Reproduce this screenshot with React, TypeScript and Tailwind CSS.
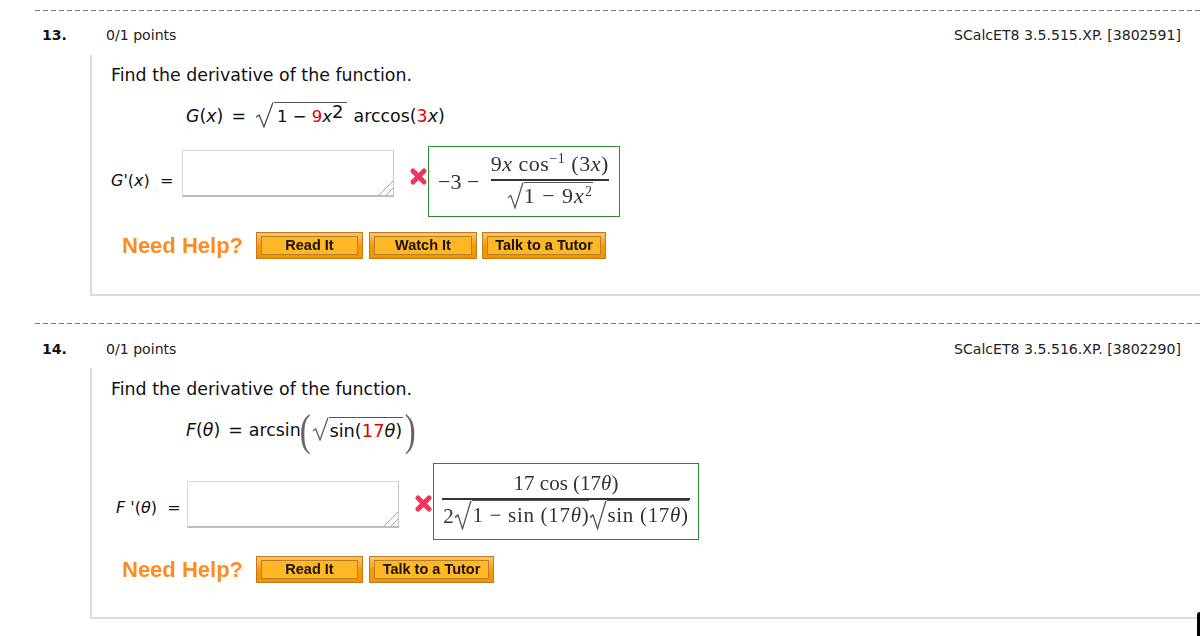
const sans = 'font-["DejaVu_Sans",Verdana,sans-serif]'

const Radical = ({ className, children }: { className: string; children: React.ReactNode }) => (
  <span className="inline-flex items-stretch align-baseline">
    <svg className={className} viewBox="0 0 18 24" fill="none" preserveAspectRatio="none">
      <path d="M1 14 L4 12 L8.5 23 L17 0.5" stroke="#555" strokeWidth="1.3" />
    </svg>
    <span className="border-t border-[#555]">{children}</span>
  </span>
)

const HelpButton = ({ label, width }: { label: string; width: string }) => (
  <div className={`${width} h-[27px] flex items-center border border-[#c07a1a] bg-gradient-to-b from-[#fbc56b] via-[#f79a05] to-[#f59300]`}>
    <div className={`mx-[4px] flex-1 h-[19px] flex items-center justify-center border border-[#b9802a] bg-[#ffb726] font-["Liberation_Sans",Arial,sans-serif] text-[14.5px] font-bold text-[#1a1206] blur-[0.3px]`}>
      {label}
    </div>
  </div>
)

const AnswerBox = ({ width, height }: { width: string; height: string }) => (
  <div className={`${width} ${height} relative border border-[#d8d8d8] border-b-2 border-b-[#bdbdbd] border-r-[#c4c4c4] bg-white`}>
    <svg className="absolute right-0 bottom-0 w-[15px] h-[15px]" viewBox="0 0 15 15" stroke="#a8a8a8" strokeWidth="1">
      <path d="M1 15 L15 1 M8 15 L15 8" />
    </svg>
  </div>
)

const WrongMark = () => (
  <svg className="w-[19px] h-[19px] shrink-0" viewBox="0 0 19 19">
    <path d="M4 4 L15 15 M15 4 L4 15" stroke="#f4345a" strokeWidth="5" strokeLinecap="round" />
  </svg>
)

const Header = ({ num, code, top }: { num: string; code: string; top: string }) => (
  <div>
    <div className="h-px bg-[repeating-linear-gradient(90deg,#777_0_5px,transparent_5px_8px)]" />
    <div className={`h-[44px] flex items-center justify-between pr-[19px] ${top}`}>
      <div className="flex items-center">
        <span className="w-[71px] pl-[7px] text-[14.1px] font-bold text-[#111]">{num}</span>
        <span className="text-[14.1px] text-[#222]">0/1 points</span>
      </div>
      <span className="text-[14.1px] text-[#222]">{code}</span>
    </div>
  </div>
)

const HelpLabel = () => (
  <span className="w-[134px] font-['Liberation_Sans',Arial,sans-serif] text-[22px] font-bold text-[#ff8a1f] blur-[0.3px]">Need Help?</span>
)

export default function App() {
  return (
    <div className={`${sans} relative w-[1200px] h-[636px] overflow-hidden bg-white text-[#111]`}>
      <div className="pl-[35px] pt-[10px]">
        <Header num="13." code="SCalcET8 3.5.515.XP. [3802591]" top="pt-[5px]" />
        <div className="ml-[55px] h-[241px] border-l-2 border-b-2 border-[#dcdcdc] pl-[19px]">
          <p className="pt-[8px] text-[17.4px] leading-[24px]">Find the derivative of the function.</p>
          <div className="mt-[15px] ml-[75px] h-[28px] flex items-center text-[17.4px] whitespace-pre">
            <span><i>G</i>(<i>x</i>)</span>
            <span className="ml-[8px] mr-[9px]">=</span>
            <Radical className="w-[19px] h-[26px]">
              <span className="px-[3px] text-[16.5px]">1 − <span className="text-[#e60000]">9</span><i>x</i><sup className="text-[18px] top-[-4px]">2</sup></span>
            </Radical>
            <span className="ml-[7px]">arccos(<span className="text-[#e60000]">3</span><i>x</i>)</span>
          </div>
          <div className="mt-[16px] flex items-start">
            <span className="mt-[23px] w-[71px] text-[16px] whitespace-pre"><i>G'</i>(<i>x</i>)  =</span>
            <div className="mt-[4px]"><AnswerBox width="w-[212px]" height="h-[47px]" /></div>
            <span className="mt-[21px] ml-[15px]"><WrongMark /></span>
            <div className="h-[71px] w-[192px] border border-[#2a8c2a] flex items-center pl-[9px] font-['Liberation_Serif',serif] text-[#333] whitespace-pre blur-[0.3px]">
              <span className="text-[22px]">−3 − </span>
              <div className="ml-[6px] mt-[3px] flex flex-col items-center">
                <span className="text-[22px] tracking-[0.5px] leading-[28px] border-b-2 border-[#333] pb-[1px]">9<i>x</i> cos<sup className="text-[14px] top-[-8px]">−1</sup> (3<i>x</i>)</span>
                <span className="mt-[1px]">
                  <Radical className="w-[17px] h-[27px]">
                    <span className="text-[22px] tracking-[1px] leading-[26px]">1 − 9<i>x</i><sup className="text-[14px] top-[-7px]">2</sup></span>
                  </Radical>
                </span>
              </div>
            </div>
          </div>
          <div className="mt-[12px] ml-[11px] flex items-center">
            <HelpLabel />
            <HelpButton label="Read It" width="w-[107px]" />
            <div className="w-[6px]" />
            <HelpButton label="Watch It" width="w-[108px]" />
            <div className="w-[5px]" />
            <HelpButton label="Talk to a Tutor" width="w-[124px]" />
          </div>
        </div>

        <div className="h-[27px]" />

        <Header num="14." code="SCalcET8 3.5.516.XP. [3802290]" top="pt-[7px]" />
        <div className="ml-[55px] h-[251px] border-l-2 border-b-2 border-[#dcdcdc] pl-[19px]">
          <p className="pt-[9px] text-[17.4px] leading-[24px]">Find the derivative of the function.</p>
          <div className="mt-[9px] ml-[75px] h-[42px] flex items-center text-[17.4px] whitespace-pre">
            <span className="mb-[2px]"><i>F</i>(<i>θ</i>)</span>
            <span className="mb-[2px] ml-[8px] mr-[6px]">=</span>
            <span className="mb-[2px]">arcsin</span>
            <span className="-ml-[3px] font-['Liberation_Serif',serif] font-light text-[44px] leading-[42px] text-[#666] scale-x-75">(</span>
            <Radical className="w-[17px] h-[24px]">
              <span className="text-[17.8px] pr-[1px]">sin(<span className="text-[#e60000]">17</span><i>θ</i>)</span>
            </Radical>
            <span className="font-['Liberation_Serif',serif] font-light text-[44px] leading-[42px] text-[#666] scale-x-75">)</span>
          </div>
          <div className="mt-[11px] flex items-start">
            <span className="mt-[33px] w-[76px] pl-[5px] text-[16px] whitespace-pre"><i>F '</i>(<i>θ</i>)  =</span>
            <div className="mt-[18px]"><AnswerBox width="w-[212px]" height="h-[47px]" /></div>
            <span className="mt-[31px] ml-[15px]"><WrongMark /></span>
            <div className="h-[77px] w-[266px] border border-[#2a8c2a] flex flex-col items-center pt-[6px] font-['Liberation_Serif',serif] text-[#333] whitespace-pre blur-[0.3px]">
              <span className="text-[21px] leading-[27px]">17 cos (17<i>θ</i>)</span>
              <div className="mt-[1px] w-[248px] border-t-2 border-[#333] flex items-start justify-center text-[21px] tracking-[0.7px] leading-[25px]">
                <span className="mt-[4px]">2</span>
                <Radical className="w-[18px] h-[30px]">
                  <span className="leading-[29px]">1 − sin (17<i>θ</i>)</span>
                </Radical>
                <Radical className="w-[18px] h-[30px]">
                  <span className="leading-[29px]">sin (17<i>θ</i>)</span>
                </Radical>
              </div>
            </div>
          </div>
          <div className="mt-[13px] ml-[11px] flex items-center">
            <HelpLabel />
            <HelpButton label="Read It" width="w-[107px]" />
            <div className="w-[6px]" />
            <HelpButton label="Talk to a Tutor" width="w-[125px]" />
          </div>
        </div>
      </div>
      {/* cursor edge in the bottom corner */}
      <div className="absolute right-0 bottom-0 w-[3px] h-[24px] rounded-tl-[3px] bg-black" />
    </div>
  )
}
